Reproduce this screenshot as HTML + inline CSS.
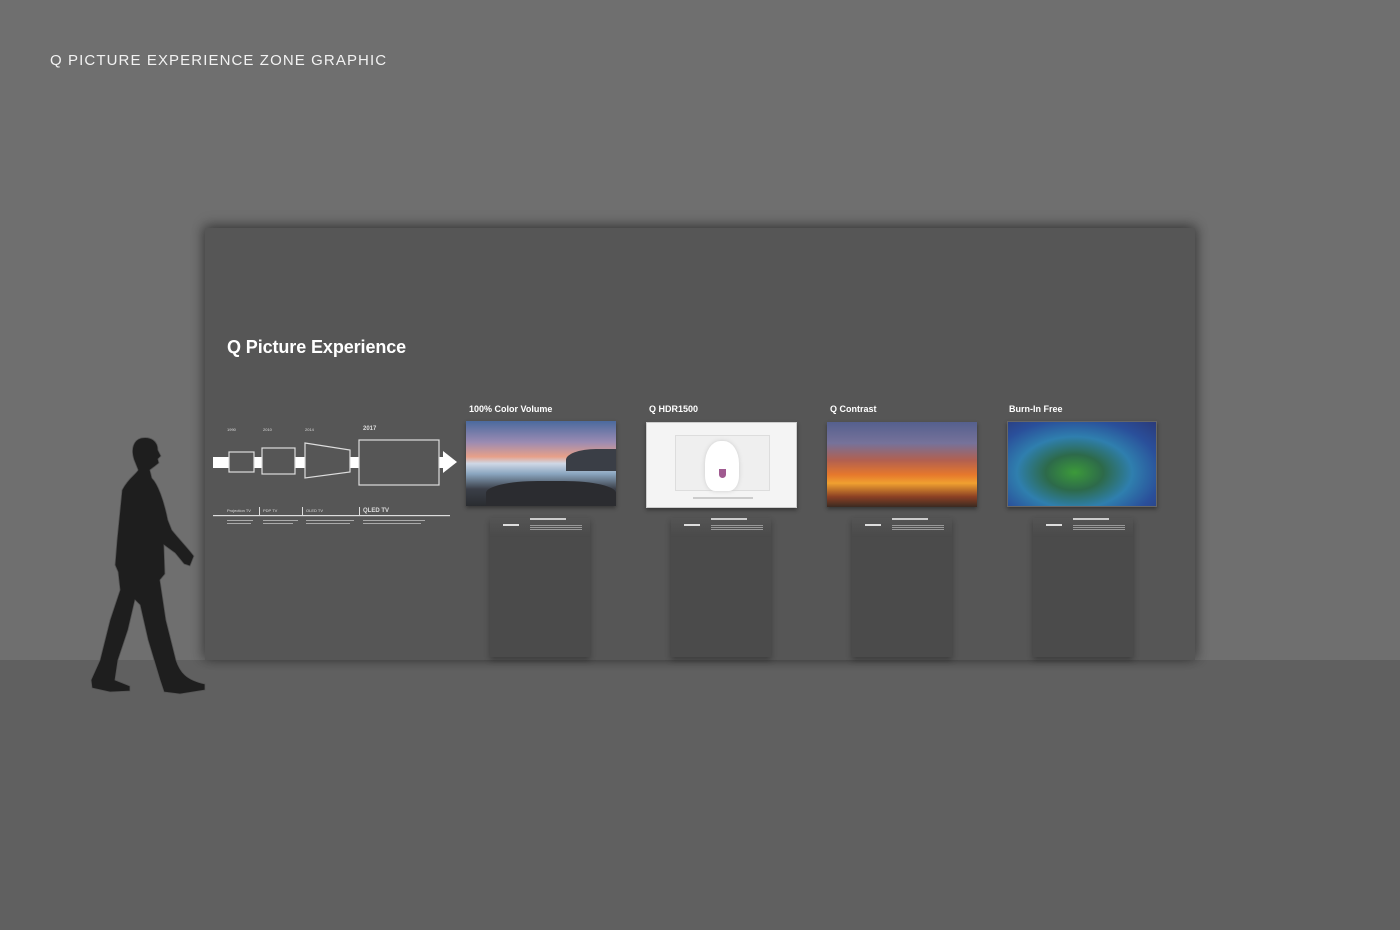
<!DOCTYPE html>
<html><head><meta charset="utf-8"><style>
*{margin:0;padding:0;box-sizing:border-box}
body{width:1400px;height:930px;position:relative;overflow:hidden;background:#6f6f6f;font-family:"Liberation Sans",sans-serif}
.abs{position:absolute}
#floor{left:0;top:660px;width:1400px;height:270px;background:#606060}
#wall{left:205px;top:228px;width:990px;height:432px;background:#565656;box-shadow:0 -4px 12px rgba(0,0,0,.25),-4px 0 10px rgba(0,0,0,.2),4px 0 10px rgba(0,0,0,.2)}
.lbl{color:#fff;font-size:9px;font-weight:bold;top:404px}
.scr{box-shadow:0 2px 4px rgba(0,0,0,.4)}
.ped{width:100px;height:139px;top:518px;background:#4b4b4b;box-shadow:0 3px 6px rgba(0,0,0,.3)}
.ped .top{height:19px;background:linear-gradient(#545454,#4a4a4a)}
.ped .dash{position:absolute;left:13px;top:6px;width:16px;height:1.5px;background:#ddd}
.ped .t1{position:absolute;left:40px;top:0px;width:36px;height:2px;background:#ccc}
.ped .t2{position:absolute;left:40px;top:7px;width:52px;height:1px;background:#999;box-shadow:0 2px 0 #999,0 4px 0 #999}
</style></head><body>
<div class="abs" style="left:50px;top:52px;color:#f2f2f2;font-size:15px;letter-spacing:1.1px">Q PICTURE EXPERIENCE ZONE GRAPHIC</div>
<div class="abs" id="floor"></div>
<div class="abs" id="wall"></div>
<div class="abs" style="left:227px;top:337px;color:#fff;font-size:18px;font-weight:bold;letter-spacing:-.1px">Q Picture Experience</div>

<svg class="abs" style="left:205px;top:420px" width="260" height="110" viewBox="0 0 260 110">
<g fill="#fff"><rect x="8" y="37" width="230" height="11"/><polygon points="238,31 252,42 238,53"/></g>
<g fill="#565656" stroke="#ddd" stroke-width="1.2">
<rect x="24" y="32" width="25" height="20"/><rect x="57" y="28" width="33" height="26"/>
<path d="M100 23 L145 30 L145 52 L100 58 Z"/><rect x="154" y="20" width="80" height="45"/></g>
<g fill="#ddd" font-size="4" font-family="Liberation Sans"><text x="22" y="11">1990</text><text x="58" y="11">2010</text><text x="100" y="11">2014</text><text x="158" y="10" font-size="6" font-weight="bold">2017</text>
<text x="22" y="92" font-size="4">Projection TV</text><text x="58" y="92">PDP TV</text><text x="101" y="92">OLED TV</text><text x="158" y="92" font-size="6" font-weight="bold">QLED TV</text></g>
<rect x="8" y="95" width="237" height="1.2" fill="#ddd"/>
<g fill="#ddd"><rect x="54" y="87" width="1" height="8"/><rect x="97" y="87" width="1" height="8"/><rect x="154" y="87" width="1" height="8"/></g>
<g fill="#aaa"><rect x="22" y="100" width="26" height="1"/><rect x="22" y="103" width="24" height="1"/><rect x="58" y="100" width="35" height="1"/><rect x="58" y="103" width="30" height="1"/><rect x="101" y="100" width="48" height="1"/><rect x="101" y="103" width="44" height="1"/><rect x="158" y="100" width="62" height="1"/><rect x="158" y="103" width="58" height="1"/></g>
</svg>

<div class="abs lbl" style="left:469px">100% Color Volume</div>
<div class="abs lbl" style="left:649px">Q HDR1500</div>
<div class="abs lbl" style="left:830px">Q Contrast</div>
<div class="abs lbl" style="left:1009px">Burn-In Free</div>

<div class="abs scr" style="left:466px;top:421px;width:150px;height:85px;background:linear-gradient(#4b6a9e 0%,#9b8bb2 25%,#e7a089 42%,#cfd8e6 50%,#8ba6c0 62%,#3b3f48 80%,#2a2c30 100%);overflow:hidden">
 <div class="abs" style="left:100px;top:28px;width:60px;height:22px;background:#3a3e46;border-radius:50% 10% 0 0"></div>
 <div class="abs" style="left:20px;top:60px;width:130px;height:30px;background:#2b2c30;border-radius:40% 40% 0 0"></div></div>
<div class="abs scr" style="left:646px;top:422px;width:151px;height:86px;background:#f4f4f4;border:1px solid #ccc">
 <div class="abs" style="left:28px;top:12px;width:95px;height:56px;border:1px solid #ddd;background:#efefef"></div>
 <div class="abs" style="left:58px;top:18px;width:34px;height:50px;border-radius:45% 45% 30% 30%;background:#fff;box-shadow:0 0 4px #ccc"></div>
 <div class="abs" style="left:72px;top:46px;width:7px;height:9px;border-radius:0 0 4px 4px;background:#a05a90"></div>
 <div class="abs" style="left:46px;top:74px;width:60px;height:2px;background:#ccc"></div></div>
<div class="abs scr" style="left:827px;top:422px;width:150px;height:85px;background:linear-gradient(#55608e 0%,#76729a 25%,#b26050 45%,#e6782c 62%,#f0a030 72%,#8b4024 88%,#3a2a22 100%)"></div>
<div class="abs scr" style="left:1007px;top:421px;width:150px;height:86px;border:1px solid #666;background:radial-gradient(ellipse at 45% 60%,#3c9a3a 0%,#2d6a4a 25%,#2f7fae 50%,#2a4f9a 75%,#2a3a7a 100%)"></div>

<div class="abs ped" style="left:490px"><div class="top"><div class="dash" style="top:6px"></div><div class="t1"></div><div class="t2"></div></div></div>
<div class="abs ped" style="left:671px"><div class="top"><div class="dash"></div><div class="t1"></div><div class="t2"></div></div></div>
<div class="abs ped" style="left:852px"><div class="top"><div class="dash"></div><div class="t1"></div><div class="t2"></div></div></div>
<div class="abs ped" style="left:1033px"><div class="top"><div class="dash"></div><div class="t1"></div><div class="t2"></div></div></div>

<svg class="abs" style="left:0;top:0" width="1400" height="930">
<path fill="#1e1e1e" stroke="#555" stroke-width="0.8" d="M141 438 C151 436 158 441 158 450 L161 456 L158 459 L159 463 L154 467 L150 470 L152 478 C158 484 164 500 168 520 L172 530 C180 540 188 548 194 556 L190 566 L184 564 L175 553 L164 545 L165 574 L160 580 L166 620 L176 660 C180 672 186 680 205 684 L205 690 L180 694 L164 692 L160 680 L148 640 L140 605 L135 600 L128 630 L118 660 L115 680 L130 686 L130 691 L110 692 L92 688 L91 680 L100 660 L110 620 L120 590 L118 572 L115 565 L117 540 L122 490 C128 478 136 474 138 470 L134 460 C130 448 134 440 141 438 Z"/>
</svg>
</body></html>
